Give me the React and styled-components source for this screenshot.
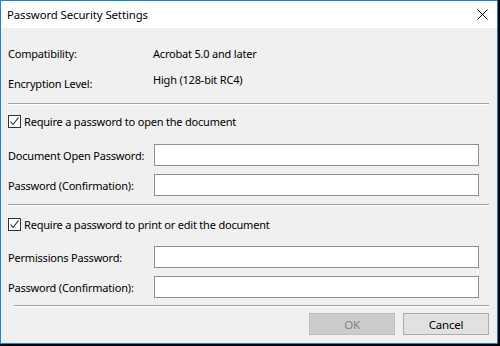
import React from 'react'
import styled, { createGlobalStyle } from 'styled-components'

const GlobalStyle = createGlobalStyle`
  html, body {
    margin: 0;
    padding: 0;
    background: #000;
  }
  body {
    font-family: "Noto Sans", "Segoe UI", sans-serif;
    font-size: 11px;
    letter-spacing: -0.2px;
    color: #000;
  }
`

const Window = styled.div`
  width: 498px;
  height: 344px;
  box-sizing: border-box;
  border: 1px solid #1883d7;
  background: #f0f0f0;
  display: flex;
  flex-direction: column;
`

const TitleBar = styled.div`
  height: 27px;
  background: #fff;
  display: flex;
  align-items: center;
  justify-content: space-between;
  padding: 0 9px 0 6px;
  font-size: 11.4px;
  letter-spacing: -0.1px;
`

const CloseButton = styled.div`
  width: 12px;
  height: 12px;
  display: flex;
  align-items: center;
  justify-content: center;
`

const Body = styled.div`
  flex: 1;
  display: flex;
  flex-direction: column;
  padding: 10px 8px 0 7px;
`

const InfoRow = styled.div`
  height: 30px;
  display: grid;
  grid-template-columns: 145px 1fr;
  align-items: center;
`

const Value = styled.span`
  margin-top: ${(p) => (p.$raise ? '-8px' : '0')};
`

const Separator = styled.div`
  border-top: 1px solid #a0a0a0;
  border-bottom: 1px solid #fff;
  margin: ${(p) => p.$margin};
  margin-left: ${(p) => p.$indent || 0}px;
`

const CheckRow = styled.label`
  height: 20px;
  display: flex;
  align-items: center;
  gap: 3px;
`

const Box = styled.span`
  width: 13px;
  height: 13px;
  box-sizing: border-box;
  border: 1px solid #333;
  background: #fff;
  display: flex;
  align-items: center;
  justify-content: center;
`

const Fields = styled.div`
  display: flex;
  flex-direction: column;
  gap: 8px;
  margin-top: ${(p) => p.$top}px;
`

const FieldRow = styled.div`
  display: grid;
  grid-template-columns: 146px 325px;
  align-items: center;
  height: 22px;
`

const Input = styled.input`
  height: 22px;
  box-sizing: border-box;
  border: 1px solid #8f8f8f;
  background: #fff;
  outline: none;
  padding: 0 4px;
  font: inherit;
`

const Buttons = styled.div`
  display: flex;
  justify-content: flex-end;
  gap: 8px;
  margin-top: 6px;
`

const Button = styled.button`
  width: 86px;
  height: 22px;
  box-sizing: border-box;
  font: inherit;
  font-size: 11.5px;
  letter-spacing: -0.2px;
  border: 1px solid ${(p) => (p.disabled ? '#bfbfbf' : '#adadad')};
  background: ${(p) => (p.disabled ? '#cccccc' : '#e1e1e1')};
  color: ${(p) => (p.disabled ? '#838383' : '#000')};
  padding: 0;
`

const Check = ({ children }) => (
  <CheckRow>
    <Box>
      <svg width="11" height="11" viewBox="0 0 11 11">
        <path d="M1.5 5.5 L4 8.5 L9.5 1.5" fill="none" stroke="#222" strokeWidth="1.1" />
      </svg>
    </Box>
    {children}
  </CheckRow>
)

const Field = ({ label }) => (
  <FieldRow>
    <span>{label}</span>
    <Input type="password" />
  </FieldRow>
)

const App = () => {
  return (
    <>
      <GlobalStyle />
      <Window>
        <TitleBar>
          <span>Password Security Settings</span>
          <CloseButton>
            <svg width="11" height="11" viewBox="0 0 11 11">
              <path d="M0.5 0.5 L10.5 10.5 M10.5 0.5 L0.5 10.5" stroke="#000" strokeWidth="1" />
            </svg>
          </CloseButton>
        </TitleBar>
        <Body>
          <InfoRow>
            <span>Compatibility:</span>
            <Value>Acrobat 5.0 and later</Value>
          </InfoRow>
          <InfoRow>
            <span>Encryption Level:</span>
            <Value $raise>High (128-bit RC4)</Value>
          </InfoRow>
          <Separator $margin="5px 0 6px" />
          <Check>Require a password to open the document</Check>
          <Fields $top={13}>
            <Field label="Document Open Password:" />
            <Field label="Password (Confirmation):" />
          </Fields>
          <Separator $margin="8px 0 8px" />
          <Check>Require a password to print or edit the document</Check>
          <Fields $top={12}>
            <Field label="Permissions Password:" />
            <Field label="Password (Confirmation):" />
          </Fields>
          <Separator $margin="7px 0 0" $indent={6} />
          <Buttons>
            <Button disabled>OK</Button>
            <Button>Cancel</Button>
          </Buttons>
        </Body>
      </Window>
    </>
  )
}

export default App
